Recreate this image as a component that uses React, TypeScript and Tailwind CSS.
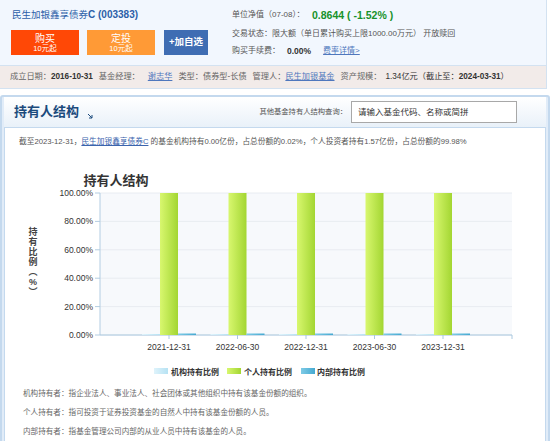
const FONT = "'Liberation Sans','Noto Sans CJK SC',sans-serif"

const yTicks = [
  { y: 193, label: '100.00%' },
  { y: 221.4, label: '80.00%' },
  { y: 249.8, label: '60.00%' },
  { y: 278.2, label: '40.00%' },
  { y: 306.6, label: '20.00%' },
  { y: 335, label: '0.00%' },
]

const categories = [
  { x: 169, label: '2021-12-31' },
  { x: 237.5, label: '2022-06-30' },
  { x: 306, label: '2022-12-31' },
  { x: 374.5, label: '2023-06-30' },
  { x: 443, label: '2023-12-31' },
]

const axisTitle = ['持', '有', '比', '例', '︵', '%', '︶']

function HolderChart() {
  return (
    <svg width={540} height={220} className="block mt-[13px]" fontFamily={FONT}>
      <defs>
        <linearGradient id="g-green" x1="0" x2="1" y1="0" y2="0">
          <stop offset="0" stopColor="#d8f76f" />
          <stop offset="1" stopColor="#a3d632" />
        </linearGradient>
        <linearGradient id="g-light" x1="0" x2="1" y1="0" y2="0">
          <stop offset="0" stopColor="#dff3fb" />
          <stop offset="1" stopColor="#b6e2f3" />
        </linearGradient>
        <linearGradient id="g-blue" x1="0" x2="1" y1="0" y2="0">
          <stop offset="0" stopColor="#7fcbe6" />
          <stop offset="1" stopColor="#44a9d1" />
        </linearGradient>
      </defs>
      <g transform="translate(-5,-160)">
        <text x={116} y={185} textAnchor="middle" fontSize={13} fontWeight="bold" fill="#333">
          持有人结构
        </text>

        {axisTitle.map((c, i) => (
          <text key={i} x={33} y={235 + i * 10} textAnchor="middle" fontSize={9} fontWeight="bold" fill="#444">
            {c}
          </text>
        ))}

        <rect x={100} y={193} width={412} height={142} fill="#f7f9fc" />
        {yTicks.map((t) => (
          <g key={t.label}>
            <line x1={100} x2={512} y1={t.y} y2={t.y} stroke="#e8ecf1" />
            <line x1={95} x2={100} y1={t.y} y2={t.y} stroke="#b3cde2" />
            <text x={93} y={t.y + 3} textAnchor="end" fontSize={8.5} fill="#333">
              {t.label}
            </text>
          </g>
        ))}
        <line x1={100} x2={100} y1={193} y2={335} stroke="#b3cde2" />
        <line x1={100} x2={512} y1={335} y2={335} stroke="#aac8df" />
        <line x1={512} x2={512} y1={335} y2={339} stroke="#aac8df" />

        {categories.map((c) => (
          <g key={c.label}>
            <rect x={c.x - 27} y={334} width={18} height={1} fill="url(#g-light)" />
            <rect x={c.x - 9} y={193} width={18} height={142} fill="url(#g-green)" />
            <rect x={c.x + 9} y={333.5} width={18} height={1.5} fill="url(#g-blue)" />
            <line x1={c.x} x2={c.x} y1={335} y2={339} stroke="#aac8df" />
            <text x={c.x} y={350} textAnchor="middle" fontSize={8.5} fill="#333">
              {c.label}
            </text>
          </g>
        ))}

        <rect x={154} y={368} width={14} height={6} fill="url(#g-light)" />
        <text x={171} y={374.5} fontSize={8} fontWeight="bold" fill="#333">机构持有比例</text>
        <rect x={227} y={368} width={14} height={6} fill="url(#g-green)" />
        <text x={244} y={374.5} fontSize={8} fontWeight="bold" fill="#333">个人持有比例</text>
        <rect x={301} y={368} width={14} height={6} fill="url(#g-blue)" />
        <text x={317} y={374.5} fontSize={8} fontWeight="bold" fill="#333">内部持有比例</text>
      </g>
    </svg>
  )
}

export default function App() {
  return (
    <div className="w-[550px] h-[441px] overflow-hidden bg-white text-[#555] font-['Liberation_Sans','Noto_Sans_CJK_SC',sans-serif]">
      {/* Fund header */}
      <div className="h-[66px] w-[547px] flex bg-[#f2f7fe] border-r border-b border-[#d3e2f1]">
        <div className="w-[232px] pl-[12px] pt-[9px]">
          <div className="h-[12px] leading-[12px] text-[9.5px] text-[#2c5fa8] whitespace-nowrap">
            民生加银鑫享债券<span className="font-bold text-[10px]">C (003383)</span>
          </div>
          <div className="mt-[9px] -ml-[1px] flex">
            <div className="w-[68px] h-[25px] bg-[#ff4806] text-white flex flex-col items-center justify-center">
              <span className="text-[10px] leading-[11px]">购买</span>
              <span className="text-[7.5px] leading-[9px]">10元起</span>
            </div>
            <div className="ml-[8px] w-[68px] h-[25px] bg-[#ff9a36] text-white flex flex-col items-center justify-center">
              <span className="text-[10px] leading-[11px]">定投</span>
              <span className="text-[7.5px] leading-[9px]">10元起</span>
            </div>
            <div className="ml-[9px] w-[44px] h-[25px] bg-[#3f6db3] text-white flex items-center justify-center text-[9.5px] font-bold">
              +加自选
            </div>
          </div>
        </div>
        <div className="pt-[9px] text-[8px] whitespace-nowrap">
          <div className="h-[12px] leading-[12px] flex items-center">
            <span className="w-[80px]">单位净值（07-08）：</span>
            <span className="text-[#17922b] font-bold text-[10.5px]">0.8644 ( -1.52% )</span>
          </div>
          <div className="mt-[7px] h-[12px] leading-[12px]">交易状态：限大额（单日累计购买上限1000.00万元） 开放赎回</div>
          <div className="mt-[5px] h-[12px] leading-[12px] flex items-center">
            <span className="w-[55px]">购买手续费：</span>
            <span className="text-[#333] font-bold text-[8.5px]">0.00%</span>
            <span className="ml-[12px] text-[#4f77bd] underline">费率详情&gt;</span>
          </div>
        </div>
      </div>

      {/* Info bar */}
      <div className="h-[23px] w-[547px] flex items-center pl-[10px] bg-[#f2ebe9] border-r border-b border-[#d3e2f1] text-[8.2px] text-[#666] whitespace-nowrap">
        成立日期：<span className="text-[#333] font-bold">2016-10-31</span>
        <span className="ml-[6px]">基金经理：</span>
        <span className="ml-[8px] text-[#4f77bd] underline">谢志华</span>
        <span className="ml-[6px]">类型：债券型-长债</span>
        <span className="ml-[6px]">管理人：</span>
        <span className="text-[#4f77bd] underline">民生加银基金</span>
        <span className="ml-[6px]">资产规模：</span>
        <span className="ml-[4px] text-[#333]">1.34亿元（截止至：<span className="font-bold">2024-03-31</span>）</span>
      </div>

      {/* Holder structure section */}
      <div className="mt-[6px] border-2 border-[#c4d9ee] rounded-t-[3px] bg-[#e1ecf8] px-[2px] pb-[2px]">
        <div className="h-[30px] flex items-center justify-between pl-[10px] pr-[29px] bg-gradient-to-b from-white to-[#e9f1f9]">
          <div className="flex items-end">
            <span className="text-[13px] font-bold text-[#1b4a7c] leading-[16px]">持有人结构</span>
            <svg width="6" height="6" viewBox="0 0 6 6" className="ml-[8px] mb-[1px]">
              <path d="M1 1 L5 5 M5 2 L5 5 L2 5" stroke="#1b4a7c" strokeWidth="1" fill="none" />
            </svg>
          </div>
          <div className="flex items-center">
            <span className="text-[7.3px] text-[#555]">其他基金持有人结构查询：</span>
            <input
              className="ml-[4px] w-[166px] h-[22px] border border-[#a8a8a8] bg-white px-[6px] text-[8.5px] text-[#333] placeholder:text-[#333] outline-none"
              placeholder="请输入基金代码、名称或简拼"
            />
          </div>
        </div>

        <div className="border border-[#c4d9ee] bg-white h-[330px]">
          <div className="pt-[9px] pl-[14px] h-[19px] leading-[10px] text-[7.7px] text-[#555] whitespace-nowrap">
            截至2023-12-31，<span className="text-[#3b64ad] underline">民生加银鑫享债券C</span> 的基金机构持有0.00亿份，占总份额的0.02%，个人投资者持有1.57亿份，占总份额的99.98%
          </div>

          <HolderChart />

          <div className="mt-[8px] pl-[18px] flex flex-col gap-[7px] text-[7.6px] leading-[12px] text-[#666]">
            <p>机构持有者：指企业法人、事业法人、社会团体或其他组织中持有该基金份额的组织。</p>
            <p>个人持有者：指可投资于证券投资基金的自然人中持有该基金份额的人员。</p>
            <p>内部持有者：指基金管理公司内部的从业人员中持有该基金的人员。</p>
          </div>
        </div>
      </div>
    </div>
  )
}
